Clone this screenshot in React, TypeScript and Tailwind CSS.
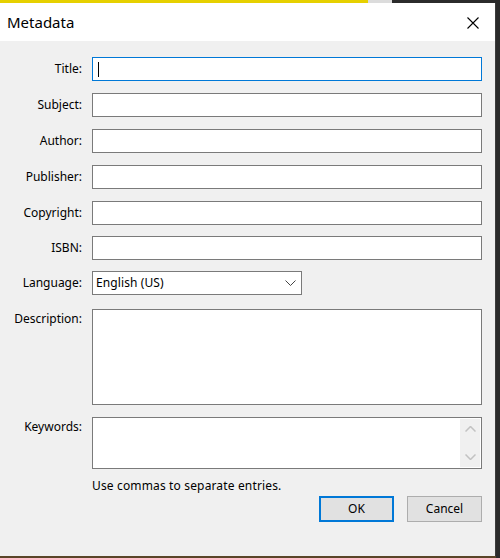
import React from 'react';

const Label = ({ children, top }: { children: React.ReactNode; top?: boolean }) => (
  <div className={`text-right text-[12px] text-black ${top ? 'self-start pt-[1px]' : 'self-center'}`}>{children}</div>
);

const Field = ({ focused }: { focused?: boolean }) => (
  <div
    className={`h-[24px] bg-white border ${focused ? 'border-[#0078d7]' : 'border-[#7a7a7a]'} flex items-center`}
  >
    {focused && <div className="ml-[5px] w-[1px] h-[15px] bg-black" />}
  </div>
);

export default function App() {
  return (
    <div
      className="w-[500px] h-[558px] bg-[#2b2b2b] flex flex-col overflow-hidden"
      style={{ fontFamily: '"Noto Sans", "Open Sans", sans-serif' }}
    >
      <div className="h-[3px] flex shrink-0">
        <div className="w-[368px] bg-[#e6d000]" />
        <div className="w-[24px] bg-[#dcdcdc]" />
      </div>
      <div className="w-[496px] h-[553px] flex flex-col bg-[#f0f0f0] border-r border-[#3c3c3c]">
        <div className="h-[38px] bg-white flex items-center justify-between pl-[7px] pr-[16px] shrink-0">
          <span className="text-[15px] text-black">Metadata</span>
          <svg width="12" height="12" viewBox="0 0 12 12" className="mt-[1px]">
            <path d="M0.5 0.5 L11.5 11.5 M11.5 0.5 L0.5 11.5" stroke="#000" strokeWidth="1.1" />
          </svg>
        </div>
        <div className="flex-1 pt-[16px] grid grid-cols-[82px_390px] gap-x-[10px] content-start">
          <Label>Title:</Label>
          <Field focused />
          <div className="col-span-2 h-[12px]" />
          <Label>Subject:</Label>
          <Field />
          <div className="col-span-2 h-[12px]" />
          <Label>Author:</Label>
          <Field />
          <div className="col-span-2 h-[12px]" />
          <Label>Publisher:</Label>
          <Field />
          <div className="col-span-2 h-[12px]" />
          <Label>Copyright:</Label>
          <Field />
          <div className="col-span-2 h-[11px]" />
          <Label>ISBN:</Label>
          <Field />
          <div className="col-span-2 h-[11px]" />
          <Label>Language:</Label>
          <div className="w-[210px] h-[24px] bg-white border border-[#7a7a7a] flex items-center justify-between pl-[3px] pr-[5px]">
            <span className="text-[12px] text-black tracking-[0.1px]">English (US)</span>
            <svg width="11" height="6" viewBox="0 0 11 6">
              <path d="M0.5 0.5 L5.5 5.5 L10.5 0.5" fill="none" stroke="#444" strokeWidth="1" />
            </svg>
          </div>
          <div className="col-span-2 h-[14px]" />
          <Label top>Description:</Label>
          <div className="h-[96px] bg-white border border-[#7a7a7a]" />
          <div className="col-span-2 h-[12px]" />
          <Label top>Keywords:</Label>
          <div className="h-[52px] bg-white border border-[#7a7a7a] flex justify-end p-[1px]">
            <div className="w-[20px] h-full bg-[#f0f0f0] flex flex-col items-center justify-between py-[7px]">
              <svg width="11" height="6" viewBox="0 0 11 6">
                <path d="M0.5 5.5 L5.5 0.5 L10.5 5.5" fill="none" stroke="#c2c2c2" strokeWidth="1.5" />
              </svg>
              <svg width="11" height="6" viewBox="0 0 11 6">
                <path d="M0.5 0.5 L5.5 5.5 L10.5 0.5" fill="none" stroke="#c2c2c2" strokeWidth="1.5" />
              </svg>
            </div>
          </div>
          <div />
          <div className="pt-[9px] text-[12px] text-black leading-[16px] tracking-[0.15px]">Use commas to separate entries.</div>
          <div className="col-span-2 flex justify-end gap-[13px] pt-[2px]">
            <button className="w-[75px] h-[26px] bg-[#e1e1e1] border-2 border-[#0078d7] text-[12px] text-black">OK</button>
            <button className="w-[75px] h-[26px] bg-[#e1e1e1] border border-[#adadad] text-[12px] text-black">Cancel</button>
          </div>
        </div>
      </div>
      <div className="h-[2px] w-[496px] bg-[#5a4528]" />
    </div>
  );
}
